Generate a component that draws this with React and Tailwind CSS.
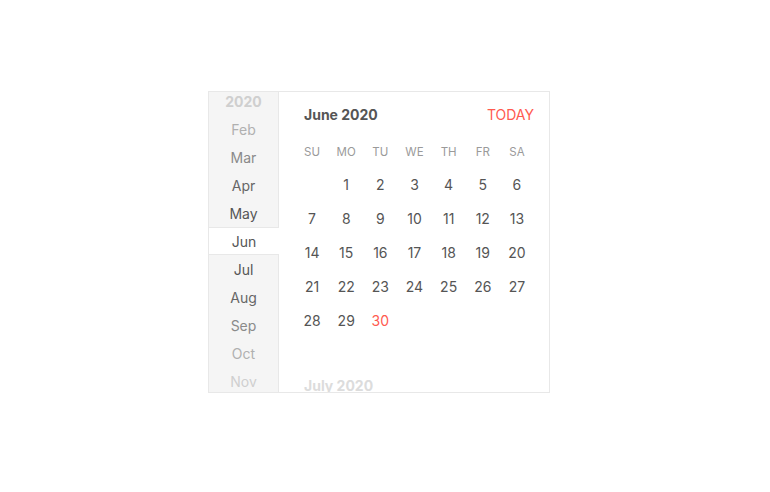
const MONTHS = [
  { label: "2020", cls: "font-bold text-[#cfcfcf]" },
  { label: "Feb", cls: "text-[#b0b0b0]" },
  { label: "Mar", cls: "text-[#8a8a8a]" },
  { label: "Apr", cls: "text-[#666]" },
  { label: "May", cls: "text-[#555]" },
  { label: "Jun", cls: "text-[#555]", active: true },
  { label: "Jul", cls: "text-[#555]" },
  { label: "Aug", cls: "text-[#666]" },
  { label: "Sep", cls: "text-[#8a8a8a]" },
  { label: "Oct", cls: "text-[#b0b0b0]" },
  { label: "Nov", cls: "text-[#cfcfcf]" },
];

const DAYS = ["SU", "MO", "TU", "WE", "TH", "FR", "SA"];

// June 2020 starts on a Monday
const cells = [null, ...Array.from({ length: 30 }, (_, i) => i + 1)];
while (cells.length % 7) cells.push(null);

export default function App() {
  return (
    <div className="w-[770px] h-[492px] bg-white pt-[91px] pl-[208px]" style={{ fontFamily: "Inter, 'Noto Sans', sans-serif" }}>
      <div className="w-[342px] h-[302px] border border-[#e8e8e8] flex overflow-hidden">

        {/* Month list */}
        <div className="w-[70px] shrink-0 bg-[#f5f5f5] border-r border-[#e8e8e8] -mt-[5px]">
          {MONTHS.map((m) => (
            <div
              key={m.label}
              className={`h-[28px] flex items-center justify-center text-[14px] ${m.cls} ${
                m.active ? "bg-white border-y border-[#e8e8e8] -mr-px relative" : ""
              }`}
            >
              {m.label}
            </div>
          ))}
        </div>

        {/* Calendar */}
        <div className="flex-1 pt-[12px] pl-[16px] pr-[15px]">
          <div className="h-[20px] flex items-center justify-between pl-[9px]">
            <span className="text-[14px] font-bold text-[#555]">June 2020</span>
            <span className="text-[14px] text-[#ff5a4f]">TODAY</span>
          </div>

          <div className="grid grid-cols-7 mt-[15px]">
            {DAYS.map((d) => (
              <div key={d} className="h-[28px] flex items-center justify-center text-[11.5px] text-[#9a9a9a]">{d}</div>
            ))}
            {cells.map((c, i) => (
              <div
                key={i}
                className={`h-[34px] flex items-center justify-center text-[14px] ${c === 30 ? "text-[#ff5a4f]" : "text-[#555]"}`}
              >
                {c}
              </div>
            ))}
          </div>

          <div className="mt-[38px] pl-[9px] h-[20px] flex items-center text-[14px] font-bold text-[#dcdcdc]">July 2020</div>
        </div>
      </div>
    </div>
  );
}
